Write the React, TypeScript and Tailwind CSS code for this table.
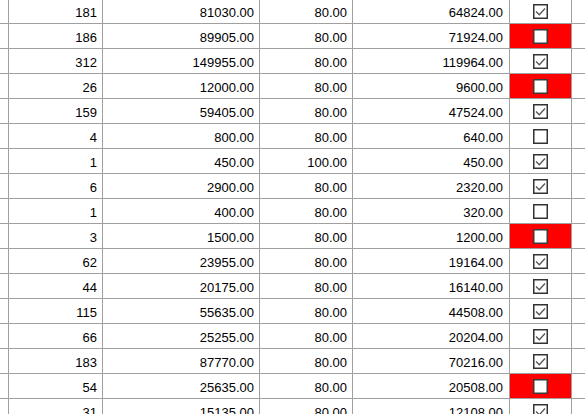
import React from 'react';

type Row = {
  qty: string;
  amount: string;
  rate: string;
  net: string;
  state: 'checked' | 'empty' | 'red';
};

const rows: Row[] = [
  { qty: '181', amount: '81030.00', rate: '80.00', net: '64824.00', state: 'checked' },
  { qty: '186', amount: '89905.00', rate: '80.00', net: '71924.00', state: 'red' },
  { qty: '312', amount: '149955.00', rate: '80.00', net: '119964.00', state: 'checked' },
  { qty: '26', amount: '12000.00', rate: '80.00', net: '9600.00', state: 'red' },
  { qty: '159', amount: '59405.00', rate: '80.00', net: '47524.00', state: 'checked' },
  { qty: '4', amount: '800.00', rate: '80.00', net: '640.00', state: 'empty' },
  { qty: '1', amount: '450.00', rate: '100.00', net: '450.00', state: 'checked' },
  { qty: '6', amount: '2900.00', rate: '80.00', net: '2320.00', state: 'checked' },
  { qty: '1', amount: '400.00', rate: '80.00', net: '320.00', state: 'empty' },
  { qty: '3', amount: '1500.00', rate: '80.00', net: '1200.00', state: 'red' },
  { qty: '62', amount: '23955.00', rate: '80.00', net: '19164.00', state: 'checked' },
  { qty: '44', amount: '20175.00', rate: '80.00', net: '16140.00', state: 'checked' },
  { qty: '115', amount: '55635.00', rate: '80.00', net: '44508.00', state: 'checked' },
  { qty: '66', amount: '25255.00', rate: '80.00', net: '20204.00', state: 'checked' },
  { qty: '183', amount: '87770.00', rate: '80.00', net: '70216.00', state: 'checked' },
  { qty: '54', amount: '25635.00', rate: '80.00', net: '20508.00', state: 'red' },
  { qty: '31', amount: '15135.00', rate: '80.00', net: '12108.00', state: 'checked' },
];

function CheckBox({ checked, red }: { checked: boolean; red: boolean }) {
  return (
    <svg width="15" height="15" viewBox="0 0 15 15">
      <rect
        x="0.75"
        y="0.75"
        width="13.5"
        height="13.5"
        fill="#ffffff"
        stroke={red ? '#3a3a3a' : '#333333'}
        strokeWidth="1.5"
      />
      {checked && (
        <path d="M3 7.5 L6.3 10.8 L12 4.5" fill="none" stroke="#555555" strokeWidth="1.3" />
      )}
    </svg>
  );
}

const cell = 'h-full border-r border-[#a0a0a0] pt-[3px] pr-[5px] text-right leading-[21px]';

export default function App() {
  return (
    <div
      className="w-[585px] h-[414px] overflow-hidden bg-white text-[13px] text-black"
      style={{ fontFamily: '"Liberation Sans", Arial, sans-serif' }}
    >
      <div className="-mt-[1px] flex flex-col">
        {rows.map((r, i) => (
          <div key={i} className="flex h-[25px] shrink-0 border-b border-[#a0a0a0]">
            <div className="w-[9px] h-full shrink-0 border-r border-[#a0a0a0]" />
            <div className={`w-[94px] shrink-0 ${cell}`}>{r.qty}</div>
            <div className={`w-[157px] shrink-0 ${cell}`}>{r.amount}</div>
            <div className={`w-[93px] shrink-0 ${cell}`}>{r.rate}</div>
            <div className={`w-[157px] shrink-0 ${cell} pr-[6px]`}>{r.net}</div>
            <div
              className={`w-[62px] h-full shrink-0 border-r border-[#a0a0a0] flex items-center justify-center ${
                r.state === 'red' ? 'bg-[#ff0000]' : 'bg-white'
              }`}
            >
              <CheckBox checked={r.state === 'checked'} red={r.state === 'red'} />
            </div>
            <div className="flex-1 h-full" />
          </div>
        ))}
      </div>
    </div>
  );
}
